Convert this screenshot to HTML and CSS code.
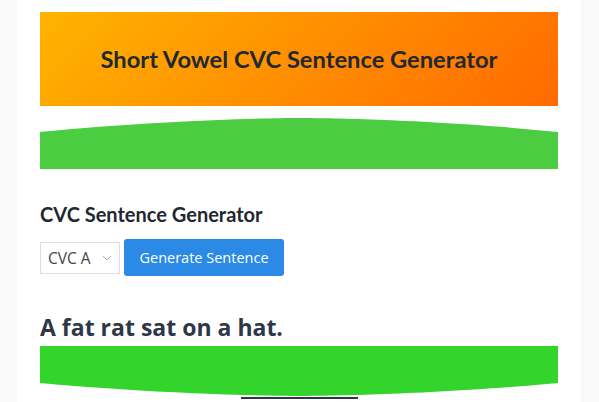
FILE: index.html
```html
<!DOCTYPE html>
<html lang="en">
<head>
<meta charset="UTF-8">
<meta name="viewport" content="width=device-width, initial-scale=1.0">
<title>Short Vowel CVC Sentence Generator</title>
<link rel="stylesheet" href="styles.css">
</head>
<body>
<div id="page">
  <div id="header">
    <h1>Short Vowel CVC Sentence Generator</h1>
  </div>

  <!-- top wave -->
  <svg class="wave wave-top" viewBox="0 0 517 51" preserveAspectRatio="none">
    <path d="M0,14 C120,2 230,0 258,0 C290,0 400,2 517,14 L517,51 L0,51 Z" fill="#4ccd41"/>
  </svg>

  <div id="generator">
    <h2>CVC Sentence Generator</h2>
    <div class="controls">
      <div class="select-wrap">
        <select id="vowel">
          <option>CVC A</option>
          <option>CVC E</option>
          <option>CVC I</option>
          <option>CVC O</option>
          <option>CVC U</option>
        </select>
        <svg class="chevron" viewBox="0 0 10 6"><path d="M1,1 L5,5 L9,1" fill="none" stroke="#aaa" stroke-width="1"/></svg>
      </div>
      <button id="generate-btn">Generate Sentence</button>
    </div>
  </div>

  <div id="sentence">A fat rat sat on a hat.</div>

  <!-- bottom wave -->
  <svg class="wave wave-bottom" viewBox="0 0 517 50" preserveAspectRatio="none">
    <path d="M0,0 L517,0 L517,37 C400,48 290,50 258,50 C230,50 120,48 0,37 Z" fill="#33d42c"/>
  </svg>

  <div class="next-block"></div>
</div>

<script>
  const sentences = {
    'CVC A': ['A fat rat sat on a hat.', 'The cat had a bag.', 'Sam ran to the van.'],
    'CVC E': ['Ted fed the red hen.', 'The pet is in a net.'],
    'CVC I': ['The pig hid in a pit.', 'Tim bit the big fig.'],
    'CVC O': ['The dog got on a log.', 'Tom has a hot pot.'],
    'CVC U': ['The pup dug in the mud.', 'A bug is on the rug.']
  };

  document.getElementById('generate-btn').addEventListener('click', function () {
    const list = sentences[document.getElementById('vowel').value];
    const pick = list[Math.floor(Math.random() * list.length)];
    document.getElementById('sentence').textContent = pick;
  });
</script>
</body>
</html>
```

FILE: styles.css
```css
body {
  margin: 0;
  background-color: #f9f9f9;
  font-family: "Open Sans", "Noto Sans", sans-serif;
  color: #2d3748;
}

#page {
  width: 518px;
  margin: 0 0 0 17px;
  background-color: #ffffff;
  padding: 12px 23px 0 23px;
  height: 390px;
  overflow: hidden;
}

#header {
  height: 94px;
  display: flex;
  align-items: center;
  justify-content: center;
  background: linear-gradient(135deg, #ffb400, #ff6a00);
}

#header h1 {
  margin: 0;
  font-family: Lato, "Liberation Sans", sans-serif;
  font-weight: bold;
  font-size: 23.7px;
  color: #222831;
}

.wave {
  display: block;
  width: 100%;
}

.wave-top {
  height: 51px;
  margin-top: 12px;
}

#generator h2 {
  margin: 33px 0 13px 0;
  font-family: Lato, "Liberation Sans", sans-serif;
  font-weight: bold;
  font-size: 20px;
  color: #222831;
}

.controls {
  display: flex;
  align-items: center;
  gap: 4px;
}

.select-wrap {
  position: relative;
}

.select-wrap select {
  appearance: none;
  -webkit-appearance: none;
  width: 80px;
  height: 32px;
  border: 1px solid #dddddd;
  border-radius: 0;
  background-color: #ffffff;
  padding: 0 0 0 7px;
  font-family: "Open Sans", "Noto Sans", sans-serif;
  font-size: 15.5px;
  color: #444444;
}

.chevron {
  position: absolute;
  right: 8px;
  top: 13px;
  width: 10px;
  height: 6px;
  pointer-events: none;
}

#generate-btn {
  width: 160px;
  height: 37px;
  border: none;
  border-radius: 3px;
  background-color: #2a8ae6;
  color: #ffffff;
  font-family: "Open Sans", "Noto Sans", sans-serif;
  font-size: 14.5px;
  cursor: pointer;
}

#sentence {
  margin-top: 36px;
  font-weight: bold;
  font-size: 23px;
  line-height: 30px;
  color: #2d3748;
}

.wave-bottom {
  height: 50px;
  margin-top: 4px;
}

.next-block {
  width: 117px;
  height: 20px;
  margin: 1px auto 0 auto;
  border-top: 2px solid #2d3748;
}
```
